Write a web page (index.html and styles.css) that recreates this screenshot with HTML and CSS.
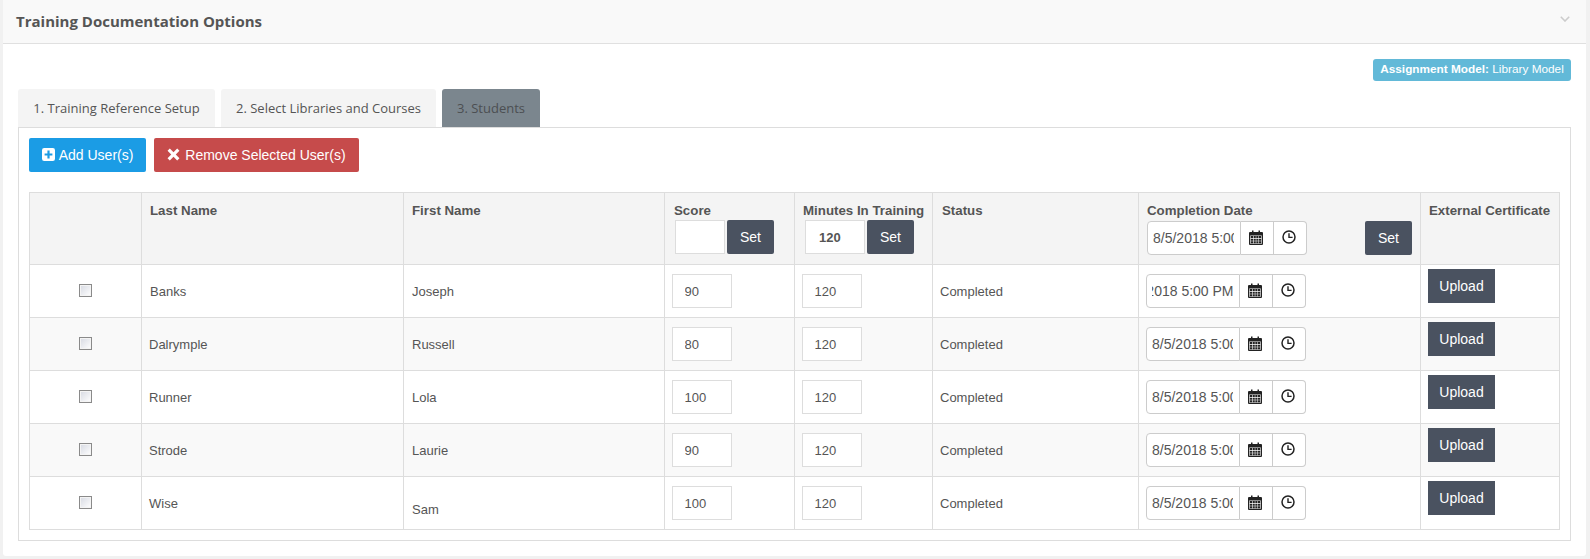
FILE: index.html
```html
<!DOCTYPE html>
<html lang="en">
<head>
<meta charset="utf-8">
<title>Training Documentation Options</title>
<link rel="stylesheet" href="styles.css">
</head>
<body>
<svg class="sprites" width="0" height="0" aria-hidden="true">
  <symbol id="cal" viewBox="0 0 14 15">
    <path fill="#222" fill-rule="evenodd" d="M1 2h2V0.5h1.5V2h5V0.5H11V2h2a1 1 0 0 1 1 1v11a1 1 0 0 1-1 1H1a1 1 0 0 1-1-1V3a1 1 0 0 1 1-1zM1.2 5.4v8.4h11.6V5.4zM1.8 6.1h2.2v2h-2.2zM4.6 6.1h2.2v2H4.6zM7.3 6.1h2.2v2H7.3zM10 6.1h2.2v2H10zM1.8 8.7h2.2v2h-2.2zM4.6 8.7h2.2v2H4.6zM7.3 8.7h2.2v2H7.3zM10 8.7h2.2v2H10zM1.8 11.3h2.2v2h-2.2zM4.6 11.3h2.2v2H4.6zM7.3 11.3h2.2v2H7.3zM10 11.3h2.2v2H10z"/>
  </symbol>
  <symbol id="clock" viewBox="0 0 14 14">
    <circle cx="7" cy="7" r="6" fill="none" stroke="#222" stroke-width="1.5"/>
    <path fill="none" stroke="#222" stroke-width="1.4" d="M7 3.2V7.4H10.6"/>
  </symbol>
</svg>
<section class="panel">
  <header class="panel-head">
    <h2>Training Documentation Options</h2>
    <svg class="chev" viewBox="0 0 10 6" width="10" height="6"><path d="M0.8 0.8 5 5 9.2 0.8" fill="none" stroke="#ccc" stroke-width="1.6"/></svg>
  </header>
  <div class="panel-body">
    <div class="badge-row"><span class="badge"><b>Assignment Model:</b> Library Model</span></div>
    <ul class="tabs">
      <li class="tab t1">1. Training Reference Setup</li>
      <li class="tab t2">2. Select Libraries and Courses</li>
      <li class="tab t3">3. Students</li>
    </ul>
    <div class="tab-box">
      <div class="actions">
        <button class="btn blue w-add">
          <svg viewBox="0 0 12 12" width="13" height="13"><path fill="#fff" fill-rule="evenodd" d="M2 0h8a2 2 0 0 1 2 2v8a2 2 0 0 1-2 2H2a2 2 0 0 1-2-2V2a2 2 0 0 1 2-2zM5 2.4v2.6H2.4v2H5v2.6h2V7h2.6V5H7V2.4z"/></svg>
          Add User(s)</button>
        <button class="btn red w-rem">
          <svg viewBox="0 0 12 12" width="13" height="13"><path fill="#fff" d="M2.6.5 6 3.9 9.4.5l2.1 2.1L8.1 6l3.4 3.4-2.1 2.1L6 8.1 2.6 11.5.5 9.4 3.9 6 .5 2.6z"/></svg>
          Remove Selected User(s)</button>
      </div>
      <table class="grid">
        <colgroup>
          <col class="c-check"><col class="c-last"><col class="c-first"><col class="c-score"><col class="c-min"><col class="c-status"><col class="c-date"><col class="c-cert">
        </colgroup>
        <thead>
          <tr>
            <th></th>
            <th class="pl-name">Last Name</th>
            <th class="pl-name">First Name</th>
            <th class="pl-score"><div class="th-label">Score</div>
              <div class="inline"><input class="field f-score-h" type="text" value=""><button class="btn dark set">Set</button></div></th>
            <th class="pl-min"><div class="th-label">Minutes In Training</div>
              <div class="inline"><input class="field f-min-h" type="text" value="120"><button class="btn dark set">Set</button></div></th>
            <th class="pl-status">Status</th>
            <th class="pl-date"><div class="th-label">Completion Date</div>
              <div class="date-h">
                <div class="dategroup"><input class="field date" type="text" value="8/5/2018 5:00 PM"><span class="addon"><svg class="i-cal" width="14" height="15"><use href="#cal"/></svg></span><span class="addon"><svg class="i-clock" width="14" height="14"><use href="#clock"/></svg></span></div>
                <button class="btn dark set set-date">Set</button>
              </div></th>
            <th class="pl-name">External Certificate</th>
          </tr>
        </thead>
        <tbody>
          <tr>
            <td class="ck"><input class="check" type="checkbox"></td>
            <td class="nudge">Banks</td><td class="nudge">Joseph</td>
            <td class="num"><input class="field f-num" type="text" value="90"></td>
            <td class="num"><input class="field f-num" type="text" value="120"></td>
            <td class="st">Completed</td>
            <td class="dt"><div class="dategroup"><input class="field date scrolled" type="text" value="8/5/2018 5:00 PM"><span class="addon"><svg class="i-cal" width="14" height="15"><use href="#cal"/></svg></span><span class="addon"><svg class="i-clock" width="14" height="14"><use href="#clock"/></svg></span></div></td>
            <td class="up"><button class="btn dark upload">Upload</button></td>
          </tr>
          <tr>
            <td class="ck"><input class="check" type="checkbox"></td>
            <td class="nm">Dalrymple</td><td class="nudge">Russell</td>
            <td class="num"><input class="field f-num" type="text" value="80"></td>
            <td class="num"><input class="field f-num" type="text" value="120"></td>
            <td class="st">Completed</td>
            <td class="dt"><div class="dategroup"><input class="field date" type="text" value="8/5/2018 5:00 PM"><span class="addon"><svg class="i-cal" width="14" height="15"><use href="#cal"/></svg></span><span class="addon"><svg class="i-clock" width="14" height="14"><use href="#clock"/></svg></span></div></td>
            <td class="up"><button class="btn dark upload">Upload</button></td>
          </tr>
          <tr>
            <td class="ck"><input class="check" type="checkbox"></td>
            <td class="nm">Runner</td><td class="nudge">Lola</td>
            <td class="num"><input class="field f-num" type="text" value="100"></td>
            <td class="num"><input class="field f-num" type="text" value="120"></td>
            <td class="st">Completed</td>
            <td class="dt"><div class="dategroup"><input class="field date" type="text" value="8/5/2018 5:00 PM"><span class="addon"><svg class="i-cal" width="14" height="15"><use href="#cal"/></svg></span><span class="addon"><svg class="i-clock" width="14" height="14"><use href="#clock"/></svg></span></div></td>
            <td class="up"><button class="btn dark upload">Upload</button></td>
          </tr>
          <tr>
            <td class="ck"><input class="check" type="checkbox"></td>
            <td class="nm">Strode</td><td class="nudge">Laurie</td>
            <td class="num"><input class="field f-num" type="text" value="90"></td>
            <td class="num"><input class="field f-num" type="text" value="120"></td>
            <td class="st">Completed</td>
            <td class="dt"><div class="dategroup"><input class="field date" type="text" value="8/5/2018 5:00 PM"><span class="addon"><svg class="i-cal" width="14" height="15"><use href="#cal"/></svg></span><span class="addon"><svg class="i-clock" width="14" height="14"><use href="#clock"/></svg></span></div></td>
            <td class="up"><button class="btn dark upload">Upload</button></td>
          </tr>
          <tr>
            <td class="ck"><input class="check" type="checkbox"></td>
            <td class="nm">Wise</td><td class="nudge low">Sam</td>
            <td class="num"><input class="field f-num" type="text" value="100"></td>
            <td class="num"><input class="field f-num" type="text" value="120"></td>
            <td class="st">Completed</td>
            <td class="dt"><div class="dategroup"><input class="field date" type="text" value="8/5/2018 5:00 PM"><span class="addon"><svg class="i-cal" width="14" height="15"><use href="#cal"/></svg></span><span class="addon"><svg class="i-clock" width="14" height="14"><use href="#clock"/></svg></span></div></td>
            <td class="up"><button class="btn dark upload">Upload</button></td>
          </tr>
        </tbody>
      </table>
    </div>
  </div>
</section>
</body>
</html>
```
FILE: styles.css
```css
* { box-sizing: border-box; }
html, body { height: 100%; }
body {
  margin: 0;
  padding: 0 4px 3px 3px;
  background: #f1f1f1;
  font-family: "Liberation Sans", Arial, sans-serif;
  color: #555;
  overflow: hidden;
}
.sprites { position: absolute; }
.panel { background: #fff; height: 556px; border-radius: 0 0 3px 3px; }
.panel-head {
  height: 44px;
  background: #f9f9f9;
  border-bottom: 1px solid #e0e0e0;
  padding: 0 15px 0 13px;
  display: flex;
  align-items: center;
  justify-content: space-between;
}
.panel-head h2 {
  margin: 0;
  font: 700 15px/1 "Open Sans", sans-serif;
  color: #555;
}
.chev { margin-top: -5px; margin-right: 1px; }
.panel-body { padding: 15px 15px 0 15px; }
.badge-row { display: flex; justify-content: flex-end; height: 30px; }
.badge {
  height: 22px;
  width: 198px;
  background: #62b9d8;
  color: #fff;
  border-radius: 3px;
  font-size: 11.8px;
  line-height: 21px;
  text-align: center;
  white-space: nowrap;
}
.tabs { list-style: none; margin: 0; padding: 0; display: flex; height: 38px; }
.tab {
  background: #f4f4f4;
  border-radius: 3px 3px 0 0;
  margin-right: 6px;
  font: 400 13px/38px "Open Sans", sans-serif;
  color: #555;
  text-align: center;
}
.t1 { width: 197px; }
.t2 { width: 215px; }
.t3 { width: 98px; background: #7b868e; color: #4c4f52; }
.tab-box {
  border: 1px solid #ddd;
  height: 414px;
  padding: 10px 11px 0 10px;
}
.actions { display: flex; gap: 8px; height: 54px; }
.btn {
  border: 0;
  border-radius: 2px;
  color: #fff;
  font: 400 14px "Liberation Sans", Arial, sans-serif;
  height: 34px;
  padding: 0;
  cursor: pointer;
}
.btn svg { vertical-align: -1px; margin-right: 1px; }
.blue { background: #1b9ce5; }
.red { background: #c64b4b; }
.dark { background: #4a5260; }
.w-add { width: 117px; }
.w-rem { width: 205px; }
.grid {
  table-layout: fixed;
  border-collapse: collapse;
  width: 1530px;
  font-size: 13px;
  color: #555;
}
.c-check { width: 112px; } .c-last { width: 262px; } .c-first { width: 261px; }
.c-score { width: 130px; } .c-min { width: 138px; } .c-status { width: 206px; }
.c-date { width: 282px; } .c-cert { width: 139px; }
.grid th, .grid td { border: 1px solid #ddd; padding: 0; }
.grid thead tr { height: 72px; }
.grid tbody tr { height: 53px; }
.grid th {
  background: #f4f4f4;
  text-align: left;
  vertical-align: top;
  font-weight: 700;
  font-size: 13.3px;
  padding-top: 10px;
  line-height: 16px;
  white-space: nowrap;
}
.grid tbody tr:nth-child(even) td { background: #f9f9f9; }
.pl-name { padding-left: 8px !important; }
.pl-score { padding-left: 9px !important; }
.pl-min { padding-left: 8px !important; }
.pl-status { padding-left: 9px !important; }
.pl-date { padding-left: 8px !important; }
.th-label { height: 12px; }
.inline { display: flex; gap: 2px; margin-left: 1px; margin-top: 5px; }
.pl-min .inline { margin-left: 2px; }
.date-h { display: flex; margin-top: 6px; justify-content: space-between; padding-right: 8px; }
.field {
  border: 1px solid #ddd;
  background: #fff;
  height: 34px;
  font: 400 13px "Liberation Sans", Arial, sans-serif;
  color: #555;
  padding: 0 6px 0 11.5px;
  outline: 0;
  border-radius: 0;
}
.f-score-h { width: 50px; }
.f-min-h { width: 60px; font-weight: 700; padding-left: 13px; }
.f-num { width: 60px; display: block; }
.set { width: 47px; }
.check {
  appearance: none;
  -webkit-appearance: none;
  display: block;
  width: 13px;
  height: 13px;
  margin: -1px 0 0 49px;
  border: 1px solid #8a8a8a;
  background: linear-gradient(135deg, #d6d9e2, #ffffff);
  box-shadow: inset 0 0 0 1px #f4f4f4;
}
.nm { padding-left: 7px !important; }
.nudge { padding-left: 8px !important; }
.low { padding-top: 12px !important; }
.num { padding-left: 7px !important; }
.st { padding-left: 7px !important; }
.dt { padding-left: 7px !important; }
.dategroup { display: flex; width: 160px; }
.dategroup .date {
  width: 94px;
  border: 1px solid #ccc;
  border-radius: 4px 0 0 4px;
  padding: 0 6px 0 5px;
  font-size: 14px;
}
.scrolled { text-indent: -29px; padding-right: 3px !important; }
.addon {
  width: 33px;
  height: 34px;
  border: 1px solid #ccc;
  border-left: 0;
  background: #fff;
  display: flex;
  align-items: center;
  justify-content: center;
}
.addon + .addon { width: 33px; border-radius: 0 4px 4px 0; }
.addon svg { display: block; }
.i-cal { margin: -2px 2px 0 0; }
.i-clock { margin: -2px 2px 0 0; }
.up { vertical-align: top; padding: 4px 0 0 7px !important; }
.upload { width: 67px; display: block; border-radius: 0; }
```
